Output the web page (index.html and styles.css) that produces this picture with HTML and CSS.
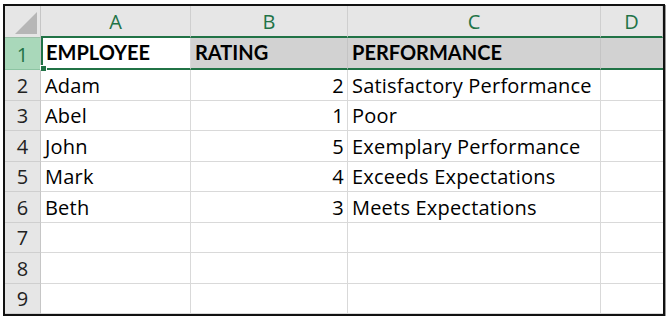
FILE: index.html
```html
<!DOCTYPE html>
<html>
<head>
<meta charset="utf-8">
<link rel="stylesheet" href="styles.css">
</head>
<body>
<div class="sheet">
  <div class="corner"><span class="tri"></span></div>
  <div class="colh">A</div>
  <div class="colh">B</div>
  <div class="colh">C</div>
  <div class="colh">D</div>

  <div class="rowh sel">1</div>
  <div class="cell active bold">EMPLOYEE<span class="handle"></span></div>
  <div class="cell seltint bold">RATING</div>
  <div class="cell seltint bold">PERFORMANCE</div>
  <div class="cell seltint last"></div>

  <div class="rowh">2</div>
  <div class="cell">Adam</div>
  <div class="cell num">2</div>
  <div class="cell">Satisfactory Performance</div>
  <div class="cell last"></div>

  <div class="rowh">3</div>
  <div class="cell">Abel</div>
  <div class="cell num">1</div>
  <div class="cell">Poor</div>
  <div class="cell last"></div>

  <div class="rowh">4</div>
  <div class="cell">John</div>
  <div class="cell num">5</div>
  <div class="cell">Exemplary Performance</div>
  <div class="cell last"></div>

  <div class="rowh">5</div>
  <div class="cell">Mark</div>
  <div class="cell num">4</div>
  <div class="cell">Exceeds Expectations</div>
  <div class="cell last"></div>

  <div class="rowh">6</div>
  <div class="cell">Beth</div>
  <div class="cell num">3</div>
  <div class="cell">Meets Expectations</div>
  <div class="cell last"></div>

  <div class="rowh">7</div>
  <div class="cell"></div>
  <div class="cell"></div>
  <div class="cell"></div>
  <div class="cell last"></div>

  <div class="rowh">8</div>
  <div class="cell"></div>
  <div class="cell"></div>
  <div class="cell"></div>
  <div class="cell last"></div>

  <div class="rowh">9</div>
  <div class="cell"></div>
  <div class="cell"></div>
  <div class="cell"></div>
  <div class="cell last"></div>
</div>
</body>
</html>
```
FILE: styles.css
```css
html, body {
  margin: 0;
  padding: 0;
  background: #ffffff;
}
body {
  padding: 4px 0 0 3px;
  font-family: "Open Sans", Lato, "Liberation Sans", sans-serif;
  color: #000;
}
.sheet {
  width: 658px;
  display: grid;
  grid-template-columns: 36px 150px 157px 253px 62px;
  grid-template-rows: 32px 32px 31px 30px 31px 30px 31px 30px 31px 30px;
  border: 2px solid #111;
  box-shadow: 1px 1px 0 #9a9a9a;
  font-size: 20px;
}
.sheet > div {
  box-sizing: border-box;
  position: relative;
}
.corner {
  background: #e6e6e6;
  border-right: 1px solid #c6c6c6;
  border-bottom: 1px solid #9bbfa8;
}
.tri {
  position: absolute;
  right: 3px;
  bottom: 3px;
  width: 0;
  height: 0;
  border-left: 22px solid transparent;
  border-bottom: 22px solid #b6b6b6;
}
.colh {
  background: #e6e6e6;
  color: #217346;
  border-right: 1px solid #cfcfcf;
  border-bottom: 2px solid #217346;
  display: flex;
  align-items: flex-end;
  justify-content: center;
  padding-bottom: 1px;
}
.rowh {
  background: #e6e6e6;
  border-right: 1px solid #c6c6c6;
  border-bottom: 1px solid #cfcfcf;
  display: flex;
  align-items: flex-end;
  justify-content: center;
  padding-bottom: 1px;
  color: #222;
}
.rowh.sel {
  background: #a9d8ba;
  color: #217346;
  border-bottom: 1px solid #8cc4a2;
}
.cell {
  border-right: 1px solid #d9d9d9;
  border-bottom: 1px solid #d9d9d9;
  display: flex;
  align-items: flex-end;
  padding: 0 3px 1px 4px;
  white-space: nowrap;
  overflow: visible;
  letter-spacing: 0.2px;
}
.cell.last {
  border-right: none;
}
.cell.num {
  justify-content: flex-end;
}
.bold {
  font-family: Lato, "Open Sans", sans-serif;
  font-size: 20px;
  font-weight: 700;
  letter-spacing: 0;
  padding-bottom: 4px;
}
.seltint {
  background: #d2d2d2;
  border-bottom: 2px solid #217346;
  border-right-color: #c4c4c4;
}
.active {
  background: #fff;
  border-left: 2px solid #217346;
  border-bottom: 2px solid #217346;
  padding-left: 3px;
}
.handle {
  position: absolute;
  left: -3px;
  bottom: -4px;
  width: 5px;
  height: 5px;
  background: #217346;
  border: 1px solid #fff;
}
```
